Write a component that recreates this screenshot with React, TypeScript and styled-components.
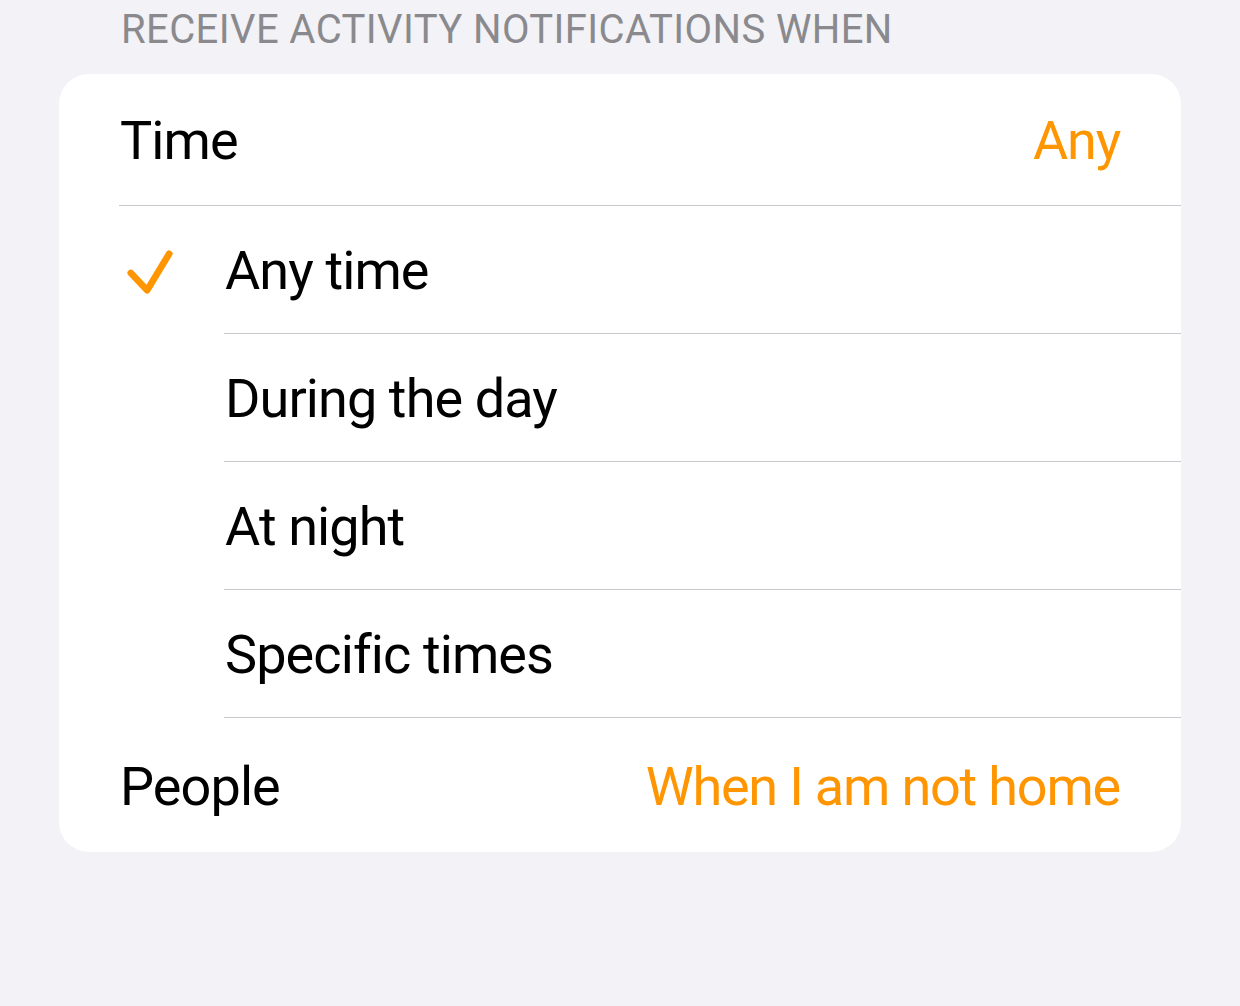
import React from 'react';
import styled, { createGlobalStyle } from 'styled-components';

const GlobalStyle = createGlobalStyle`
  html, body {
    margin: 0;
    padding: 0;
    background: #f2f2f7;
  }
  body {
    font-family: Roboto, Inter, "Noto Sans", "Liberation Sans", sans-serif;
    -webkit-font-smoothing: antialiased;
  }
`;

const Page = styled.div`
  width: 1240px;
  height: 1006px;
  background: #f2f2f7;
  box-sizing: border-box;
  padding: 0 59px;
  overflow: hidden;
`;

const SectionTitle = styled.div`
  height: 74px;
  padding-left: 62px;
  box-sizing: border-box;
  font-size: 40px;
  line-height: 60px;
  color: #8a8a8e;
  letter-spacing: 0.4px;
  text-transform: uppercase;
`;

const Card = styled.div`
  background: #ffffff;
  border-radius: 30px;
  overflow: hidden;
`;

const Row = styled.div<{ $height: number }>`
  display: flex;
  align-items: stretch;
  height: ${p => p.$height}px;
`;

// leading gutter; its width decides where the separator starts
const Gutter = styled.div<{ $width: number }>`
  flex: 0 0 ${p => p.$width}px;
  display: flex;
  align-items: center;
`;

const CheckSlot = styled.div`
  padding: 4px 0 0 68px;
  display: flex;
  align-items: center;
`;

const Content = styled.div<{ $divider?: boolean }>`
  flex: 1;
  display: flex;
  align-items: center;
  justify-content: space-between;
  padding: 2px 61px 0 1px;
  border-bottom: ${p => (p.$divider ? '1.5px solid #c8c8cc' : 'none')};
`;

const Label = styled.span`
  font-size: 54px;
  color: #000000;
  letter-spacing: -0.9px;
`;

const Value = styled.span`
  font-size: 54px;
  color: #ff9500;
  letter-spacing: -1.2px;
`;

const Check = () => (
  <svg width="46" height="46" viewBox="0 0 48 48" fill="none">
    <path
      d="M4 25 L21 43 L44 5"
      stroke="#ff9500"
      strokeWidth="7"
      strokeLinecap="round"
      strokeLinejoin="round"
    />
  </svg>
);

const options = ['Any time', 'During the day', 'At night', 'Specific times'];

export default function App() {
  const selected = 'Any time';
  return (
    <Page>
      <GlobalStyle />
      <SectionTitle>Receive Activity Notifications When</SectionTitle>
      <Card>
        <Row $height={132}>
          <Gutter $width={60} />
          <Content $divider>
            <Label>Time</Label>
            <Value>Any</Value>
          </Content>
        </Row>
        {options.map(opt => (
          <Row key={opt} $height={128}>
            <Gutter $width={165}>
              {opt === selected && (
                <CheckSlot>
                  <Check />
                </CheckSlot>
              )}
            </Gutter>
            <Content $divider>
              <Label>{opt}</Label>
            </Content>
          </Row>
        ))}
        <Row $height={134}>
          <Gutter $width={60} />
          <Content>
            <Label>People</Label>
            <Value>When I am not home</Value>
          </Content>
        </Row>
      </Card>
    </Page>
  );
}
